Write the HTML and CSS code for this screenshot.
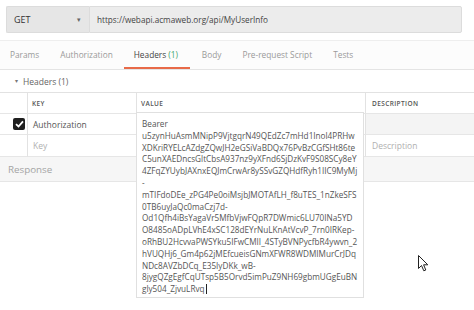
FILE: index.html
```html
<!DOCTYPE html>
<html>
  <head>
    <title>Request</title>
    <link rel="stylesheet" href="styles.css">
  </head>
  <body>
    <div class="request-bar">
      <div class="method">
        <span>GET</span>
        <span class="caret">&#9662;</span>
      </div>
      <div class="url">https://webapi.acmaweb.org/api/MyUserInfo</div>
    </div>

    <div class="tabs">
      <div class="tab">Params</div>
      <div class="tab">Authorization</div>
      <div class="tab active">Headers <span class="count">(1)</span></div>
      <div class="tab">Body</div>
      <div class="tab">Pre-request Script</div>
      <div class="tab">Tests</div>
    </div>

    <div class="section-title"><span class="toggle">&#9662;</span> Headers (1)</div>

    <div class="headers">
      <div class="cell head"></div>
      <div class="cell head">KEY</div>
      <div class="cell head">VALUE</div>
      <div class="cell head desc">DESCRIPTION</div>

      <div class="cell check-cell">
        <span class="checkbox">
          <svg width="9" height="8" viewBox="0 0 9 8">
            <path d="M1 4.2 L3.5 6.5 L8 1.3" fill="none" stroke="#fff" stroke-width="1.8"/>
          </svg>
        </span>
      </div>
      <div class="cell">Authorization</div>
      <div class="cell"></div>
      <div class="cell desc shaded"></div>

      <div class="cell"></div>
      <div class="cell placeholder">Key</div>
      <div class="cell"></div>
      <div class="cell desc placeholder">Description</div>
    </div>

    <div class="response">Response</div>

    <div class="value-editor">Bearer
u5zynHuAsmMNipP9VjtgqrN49QEdZc7mHd1Inol4PRHw
XDKriRYELcAZdgZQwJH2eGSiVaBDQx76PvBzCGfSHt86te
C5unXAEDncsGltCbsA937nz9yXFnd6SjDzKvF9S08SCy8eY
4ZFqZYUybJAXnxEQJmCrwAr8ySSvGZQHdfRyh1IIC9MyMj
-
mTIFdoDEe_zPG4Pe0oiMsjbJMOTAfLH_f8uTES_1nZkeSFS
0TB6uyJaQc0maCzj7d-
Od1Qfh4iBsYagaVr5MfbVjwFQpR7DWmic6LU70INa5YD
O8485oADpLVhE4xSC128dEYrNuLKnAtVcvP_7rn0IRKep-
oRhBU2HcvvaPWSYku5IFwCMII_4STyBVNPycfbR4ywvn_2
hVUQHj6_Gm4p62jMEfcueisGNmXFWR8WDMIMurCrJDq
NDc8AVZbDCq_E35IyDKk_wB-
8jygQZgEgfCqUTsp5B5Orvd5imPuZ9NH69gbmUGgEuBN
gly504_ZjvuLRvq<span class="text-caret"></span></div>

    <svg class="pointer" width="12" height="17" viewBox="0 0 12 17">
      <path d="M0.5 0.5 L0.5 13.5 L3.5 10.5 L5.8 15.8 L7.8 15 L5.6 9.8 L9.8 9.8 Z" fill="#fff" stroke="#222" stroke-width="1"/>
    </svg>
  </body>
</html>
```

FILE: styles.css
```css
body {
  margin: 0;
  font-family: "Open Sans", sans-serif;
  font-size: 9px;
  color: #505050;
  background: #fff;
  position: relative;
  width: 474px;
  height: 310px;
  overflow: hidden;
}

.request-bar {
  display: flex;
  height: 27px;
  padding: 6px 12px 0 6px;
}

.method {
  width: 67px;
  display: flex;
  align-items: center;
  justify-content: space-between;
  padding: 0 8px 0 7px;
  background: #e6e6e6;
  border: 1px solid #dcdcdc;
  border-right: none;
  border-radius: 2px 0 0 2px;
  color: #333;
  font-size: 9px;
}

.caret {
  font-size: 7px;
  color: #666;
}

.url {
  flex: 1;
  display: flex;
  align-items: center;
  padding-left: 7px;
  background: #ececec;
  border: 1px solid #dcdcdc;
  border-radius: 0 2px 2px 0;
  color: #444;
  font-size: 8.2px;
}

.tabs {
  display: flex;
  height: 28px;
  margin-top: 7px;
  border-top: 1px solid #eeeeee;
  border-bottom: 1px solid #e4e4e4;
  background: #fcfcfc;
}

.tab {
  display: flex;
  align-items: center;
  padding: 0 10px;
  margin-right: 1px;
  color: #9a9a9a;
  font-size: 8.3px;
  border-bottom: 2px solid transparent;
}

.tab.active {
  color: #444;
  border-bottom-color: #e86a48;
  padding: 0 12px 0 10px;
  margin-right: 2px;
}

.count {
  color: #3fa56b;
  margin-left: 2px;
}

.section-title {
  height: 22px;
  display: flex;
  align-items: center;
  padding-left: 15px;
  color: #666;
  font-size: 8.5px;
}

.toggle {
  font-size: 6px;
  margin-right: 5px;
  color: #777;
}

.headers {
  display: grid;
  grid-template-columns: 27px 109px 229px 1fr;
  grid-template-rows: 21px 21px 22px;
  border-top: 1px solid #e2e2e2;
}

.cell {
  display: flex;
  align-items: center;
  padding-left: 5px;
  border-bottom: 1px solid #e6e6e6;
  border-left: 1px solid #e2e2e2;
  color: #555;
  font-size: 8.5px;
}

.cell:nth-child(4n+1) {
  border-left: none;
}

.head {
  font-size: 6.5px;
  font-weight: 600;
  letter-spacing: 0.4px;
  color: #555;
  padding-left: 4px;
}

.desc {
  padding-left: 6px;
}

.shaded {
  background: #f4f4f4;
}

.placeholder {
  color: #b0b0b0;
}

.check-cell {
  justify-content: flex-end;
  padding: 0 2px 0 0;
}

.checkbox {
  width: 12px;
  height: 12px;
  border-radius: 2px;
  background: #1f1f1f;
  display: flex;
  align-items: center;
  justify-content: center;
}

.response {
  height: 24px;
  display: flex;
  align-items: center;
  padding-left: 8px;
  font-size: 9.8px;
  color: #a4a4a4;
  background: #f6f6f6;
  border-bottom: 1px solid #e6e6e6;
}

.value-editor {
  position: absolute;
  left: 136px;
  top: 112px;
  width: 217px;
  padding: 5px 4px 2px 5px;
  background: #fff;
  border: 1px solid #e0e0e0;
  white-space: pre;
  font-size: 8.2px;
  line-height: 11.8px;
  color: #555;
}

.text-caret {
  display: inline-block;
  width: 1px;
  height: 10px;
  margin-left: 1px;
  vertical-align: -2px;
  background: #222;
}

.pointer {
  position: absolute;
  left: 418px;
  top: 255px;
}
```
